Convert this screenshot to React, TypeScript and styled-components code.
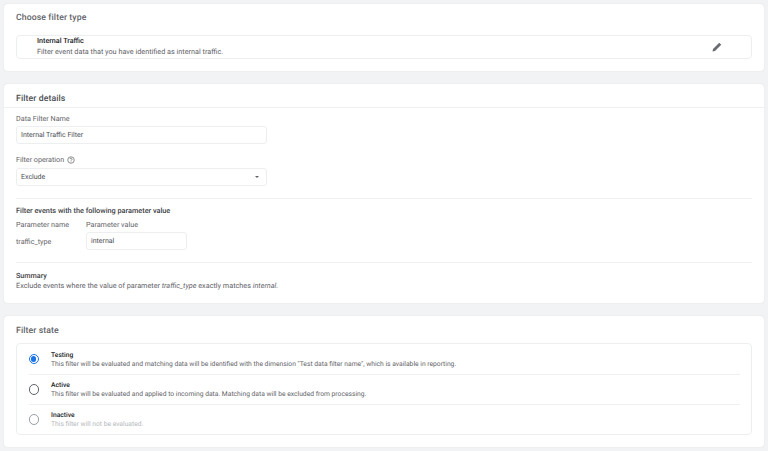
import React from 'react';
import styled, { createGlobalStyle } from 'styled-components';

const GlobalStyle = createGlobalStyle`
  html, body {
    margin: 0;
    padding: 0;
    background: #f1f3f4;
    font-family: Roboto, "Liberation Sans", sans-serif;
    color: #3c4043;
    text-rendering: geometricPrecision;
  }
`;

const Page = styled.div`
  width: 768px;
  height: 451px;
  overflow: hidden;
  box-sizing: border-box;
  padding: 4px 4px 0;
  display: flex;
  flex-direction: column;
`;

const Card = styled.section<{ $height: number; $gap: number }>`
  height: ${(p) => p.$height}px;
  margin-bottom: ${(p) => p.$gap}px;
  flex: none;
  box-sizing: border-box;
  background: #fff;
  border-radius: 3px;
  box-shadow: 0 0 1px rgba(60, 64, 67, 0.22);
`;

const CardTitle = styled.h2<{ $height: number }>`
  margin: 0;
  padding: 2px 12px 0;
  box-sizing: border-box;
  height: ${(p) => p.$height}px;
  display: flex;
  align-items: center;
  font-size: 8.7px;
  font-weight: 500;
  letter-spacing: 0.1px;
  color: #5f6368;
`;

const DetailsHeader = styled(CardTitle)`
  padding-top: 6px;
  border-bottom: 1px solid #eff0f1;
  color: #4a4e52;
`;

const TypeBox = styled.div`
  margin: 4.5px 12px 0;
  height: 24px;
  box-sizing: border-box;
  border: 1px solid #eceef0;
  border-radius: 4px;
  padding: 0 28px 0 20px;
  display: flex;
  align-items: center;
  justify-content: space-between;
`;

const Title = styled.div`
  font-size: 7.2px;
  line-height: 10.4px;
  font-weight: 500;
  color: #202124;
`;

const Description = styled.div`
  font-size: 7.27px;
  line-height: 10.4px;
  color: #5f6368;
`;

const PencilIcon = styled.svg`
  width: 12px;
  height: 12px;
  flex: none;
  fill: #696d71;
`;

const Details = styled.div`
  padding: 6px 12px 0;
`;

const Label = styled.div`
  display: flex;
  align-items: center;
  gap: 3px;
  font-size: 7.2px;
  line-height: 10px;
  color: #5f6368;
`;

const HelpIcon = styled.svg`
  width: 8px;
  height: 8px;
  fill: none;
  stroke: #5f6368;
`;

const Field = styled.div<{ $width: number }>`
  width: ${(p) => p.$width}px;
  height: 18px;
  box-sizing: border-box;
  border: 1px solid #eceef0;
  border-radius: 3px;
  padding: 0 4px;
  display: flex;
  align-items: center;
  justify-content: space-between;
  font-size: 7px;
  color: #4a4e52;
`;

const NameField = styled(Field)`
  margin-top: 2px;
  margin-bottom: 11px;
`;

const SelectField = styled(Field)`
  margin-top: 2.7px;
  padding-right: 7px;
`;

const Caret = styled.span`
  width: 0;
  height: 0;
  border-left: 2.5px solid transparent;
  border-right: 2.5px solid transparent;
  border-top: 2.5px solid #5f6368;
`;

const Divider = styled.hr<{ $top: number }>`
  margin: ${(p) => p.$top}px 0 0;
  border: 0;
  border-top: 1px solid #eff0f1;
`;

const SubTitle = styled(Title)`
  margin-top: 7.3px;
  font-size: 7.3px;
  color: #3c4043;
  line-height: 10px;
`;

const ParamGrid = styled.div`
  display: grid;
  grid-template-columns: 70px 100.5px;
  grid-template-rows: 10px 18px;
  row-gap: 2.3px;
  margin-top: 4px;
  font-size: 7.2px;
  align-items: center;
  color: #5f6368;
`;

const SummaryTitle = styled(Title)`
  margin-top: 7.7px;
  color: #3c4043;
  line-height: 10px;
`;

const SummaryText = styled(Description)`
  line-height: 10px;

  em {
    font-style: italic;
  }
`;

const StateBox = styled.div`
  margin: 0 12px;
  height: 92px;
  box-sizing: border-box;
  border: 1px solid #eceef0;
  border-radius: 4px;
  padding: 0 11.5px;
  display: grid;
  grid-template-rows: 30px 30px 1fr;
`;

const StateRow = styled.div`
  display: flex;
  align-items: center;
  gap: 12.2px;

  & + & {
    border-top: 1px solid #eff0f1;
  }
`;

const Radio = styled.span<{ $checked?: boolean; $disabled?: boolean }>`
  width: 10.4px;
  height: 10.4px;
  flex: none;
  box-sizing: border-box;
  border-radius: 50%;
  border: 1.2px solid
    ${(p) => (p.$checked ? '#1a73e8' : p.$disabled ? '#9aa0a6' : '#5f6368')};
  display: flex;
  align-items: center;
  justify-content: center;

  &::after {
    content: '';
    display: ${(p) => (p.$checked ? 'block' : 'none')};
    width: 5.4px;
    height: 5.4px;
    border-radius: 50%;
    background: #1a73e8;
  }
`;

const StateCopy = styled.div`
  padding-top: 1px;
`;

const StateTitle = styled.div`
  font-size: 6.7px;
  line-height: 9px;
  font-weight: 500;
  color: #202124;
`;

const StateText = styled.div<{ $muted?: boolean }>`
  font-size: 6.72px;
  line-height: 9px;
  color: ${(p) => (p.$muted ? '#b4b7ba' : '#5f6368')};
`;

const states = [
  {
    title: 'Testing',
    text: 'This filter will be evaluated and matching data will be identified with the dimension "Test data filter name", which is available in reporting.',
    checked: true,
  },
  {
    title: 'Active',
    text: 'This filter will be evaluated and applied to incoming data. Matching data will be excluded from processing.',
  },
  {
    title: 'Inactive',
    text: 'This filter will not be evaluated.',
    disabled: true,
  },
];

const App: React.FC = () => (
  <>
    <GlobalStyle />
    <Page>
      <Card $height={66.5} $gap={13.5}>
        <CardTitle $height={26}>Choose filter type</CardTitle>
        <TypeBox>
          <div>
            <Title>Internal Traffic</Title>
            <Description>Filter event data that you have identified as internal traffic.</Description>
          </div>
          <PencilIcon viewBox="0 0 24 24">
            <path d="M3 21l1-5L16.5 3.5l4 4L8 20z" />
          </PencilIcon>
        </TypeBox>
      </Card>

      <Card $height={219} $gap={13}>
        <DetailsHeader $height={24}>Filter details</DetailsHeader>
        <Details>
          <Label>Data Filter Name</Label>
          <NameField $width={250.5}>Internal Traffic Filter</NameField>
          <Label>
            Filter operation
            <HelpIcon viewBox="0 0 16 16">
              <circle cx="8" cy="8" r="6.5" strokeWidth="1.4" />
              <path d="M6 6.3a2 2 0 1 1 3 1.8c-.7.4-1 .8-1 1.6" strokeWidth="1.4" />
              <path d="M8 11v1.4" strokeWidth="1.4" />
            </HelpIcon>
          </Label>
          <SelectField $width={250.5}>
            Exclude
            <Caret />
          </SelectField>
          <Divider $top={12} />
          <SubTitle>Filter events with the following parameter value</SubTitle>
          <ParamGrid>
            <span>Parameter name</span>
            <span>Parameter value</span>
            <span>traffic_type</span>
            <Field $width={100.5}>internal</Field>
          </ParamGrid>
          <Divider $top={11.7} />
          <SummaryTitle>Summary</SummaryTitle>
          <SummaryText>
            Exclude events where the value of parameter <em>traffic_type</em> exactly matches{' '}
            <em>internal.</em>
          </SummaryText>
        </Details>
      </Card>

      <Card $height={131} $gap={0}>
        <CardTitle $height={27}>Filter state</CardTitle>
        <StateBox>
          {states.map((state) => (
            <StateRow key={state.title}>
              <Radio $checked={state.checked} $disabled={state.disabled} />
              <StateCopy>
                <StateTitle>{state.title}</StateTitle>
                <StateText $muted={state.disabled}>{state.text}</StateText>
              </StateCopy>
            </StateRow>
          ))}
        </StateBox>
      </Card>
    </Page>
  </>
);

export default App;
